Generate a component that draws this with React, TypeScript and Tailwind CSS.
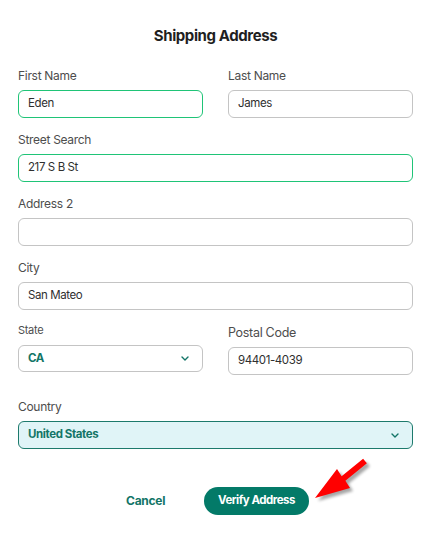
import React from "react";

function Chevron() {
  return (
    <svg width="8" height="5" viewBox="0 0 8 5" fill="none">
      <path d="M1 1 L4 4 L7 1" stroke="#137567" strokeWidth="1.4" strokeLinecap="round" strokeLinejoin="round" />
    </svg>
  );
}

function Field({ label, value, focus }: { label: string; value: string; focus?: boolean }) {
  return (
    <div className="flex flex-col">
      <label className="text-[12px] leading-[14px] tracking-[-0.3px] text-[#4d4d4d]">{label}</label>
      <div
        className={`mt-[7px] h-[28px] rounded-[6px] border px-[9px] flex items-center text-[11.5px] tracking-[-0.4px] text-[#2f2f2f] ${
          focus ? "border-[#1fc477]" : "border-[#c4c4c4]"
        }`}
      >
        {value}
      </div>
    </div>
  );
}

export default function App() {
  const pts = "315,498 337,469 341.6,476.2 363.1,458.7 366.9,463.3 345.4,480.8 350,488";
  return (
    <div
      className="relative w-[431px] h-[533px] bg-white px-[18px] pt-[26px]"
      style={{ fontFamily: "Inter, 'Liberation Sans', sans-serif" }}
    >
      <h2 className="text-center text-[15px] leading-[20px] font-bold tracking-[-0.4px] text-[#1f1f1f]">
        Shipping Address
      </h2>

      <div className="mt-[23px] grid grid-cols-2 gap-x-[25px]">
        <Field label="First Name" value="Eden" focus />
        <Field label="Last Name" value="James" />
      </div>

      <div className="mt-[15px] flex flex-col gap-[15px]">
        <Field label="Street Search" value="217 S B St" focus />
        <Field label="Address 2" value="" />
        <Field label="City" value="San Mateo" />
      </div>

      <div className="mt-[13px] grid grid-cols-2 gap-x-[25px] items-start">
        <div className="flex flex-col">
          <label className="text-[11px] leading-[14px] tracking-[-0.3px] text-[#4d4d4d]">State</label>
          <div className="mt-[8px] h-[27px] rounded-[6px] border border-[#c4c4c4] pl-[9px] pr-[13px] flex items-center justify-between">
            <span className="text-[11.5px] font-bold tracking-[-0.4px] text-[#137567]">CA</span>
            <Chevron />
          </div>
        </div>
        <div className="flex flex-col pt-[3px]">
          <label className="text-[12.5px] leading-[14px] tracking-[-0.3px] text-[#4d4d4d]">Postal Code</label>
          <div className="mt-[7px] h-[28px] rounded-[6px] border border-[#c4c4c4] px-[9px] flex items-center text-[11.5px] tracking-[-0.4px] text-[#2f2f2f]">
            94401-4039
          </div>
        </div>
      </div>

      <div className="mt-[25px] flex flex-col">
        <label className="text-[12px] leading-[14px] tracking-[-0.3px] text-[#4d4d4d]">Country</label>
        <div className="mt-[7px] h-[28px] rounded-[6px] border border-[#1d7a6c] bg-[#e0f4f7] pl-[9px] pr-[13px] flex items-center justify-between">
          <span className="text-[11.5px] font-bold tracking-[-0.4px] text-[#137567]">United States</span>
          <Chevron />
        </div>
      </div>

      <div className="mt-[38px] flex items-center justify-center gap-[39px] pl-[4px]">
        <button className="text-[12px] font-bold text-[#137567] tracking-[-0.3px]">Cancel</button>
        <button className="h-[28px] rounded-full bg-[#037a68] px-[14px] text-[11.5px] font-bold text-white tracking-[-0.5px]">
          Verify Address
        </button>
      </div>

      <svg
        className="absolute left-0 top-0 pointer-events-none"
        width="431"
        height="533"
        viewBox="0 0 431 533"
      >
        <defs>
          <filter id="blur" x="-20%" y="-20%" width="140%" height="140%">
            <feGaussianBlur stdDeviation="1.5" />
          </filter>
        </defs>
        <polygon points={pts} fill="#000" opacity="0.35" transform="translate(3,3)" filter="url(#blur)" />
        <polygon points={pts} fill="#ff0000" />
      </svg>
    </div>
  );
}
